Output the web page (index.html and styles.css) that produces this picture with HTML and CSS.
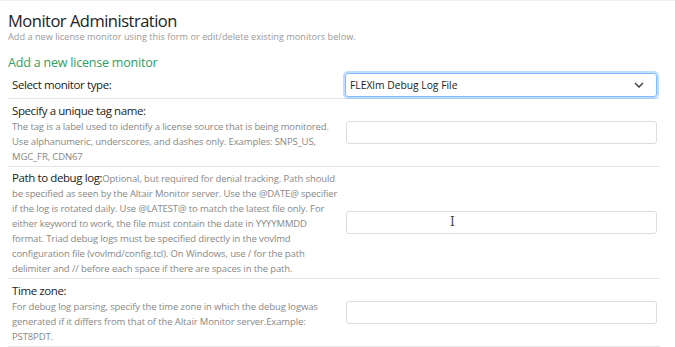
FILE: index.html
```html
<!DOCTYPE html>
<html>
<head>
<meta charset="utf-8">
<link rel="stylesheet" href="styles.css">
</head>
<body>
<div class="page">
  <h1 class="title">Monitor Administration</h1>
  <p class="subtitle">Add a new license monitor using this form or edit/delete existing monitors below.</p>
  <h2 class="section">Add a new license monitor</h2>
  <div class="form">
    <div class="row row-select">
      <div class="label-cell"><span class="label">Select monitor type:</span></div>
      <div class="field-cell">
        <div class="select">
          <span>FLEXlm Debug Log File</span>
          <svg class="chev" width="10" height="6" viewBox="0 0 10 6"><path d="M1 1l4 4 4-4" fill="none" stroke="#333" stroke-width="1.3"/></svg>
        </div>
      </div>
    </div>
    <div class="row">
      <div class="label-cell">
        <div class="label">Specify a unique tag name:</div>
        <div class="desc">The tag is a label used to identify a license source that is being monitored. Use alphanumeric, underscores, and dashes only. Examples: SNPS_US, MGC_FR, CDN67</div>
      </div>
      <div class="field-cell"><div class="input"></div></div>
    </div>
    <div class="row">
      <div class="label-cell">
        <div class="desc"><span class="label">Path to debug log:</span>Optional, but required for denial tracking. Path should be specified as seen by the Altair Monitor server. Use the @DATE@ specifier if the log is rotated daily. Use @LATEST@ to match the latest file only. For either keyword to work, the file must contain the date in YYYYMMDD<br>format. Triad debug logs must be specified directly in the vovlmd configuration file (vovlmd/config.tcl). On Windows, use / for the path delimiter and // before each space if there are spaces in the path.</div>
      </div>
      <div class="field-cell"><div class="input"><span class="cursor">I</span></div></div>
    </div>
    <div class="row">
      <div class="label-cell">
        <div class="label">Time zone:</div>
        <div class="desc">For debug log parsing, specify the time zone in which the debug logwas generated if it differs from that of the Altair Monitor server.Example: PST8PDT.</div>
      </div>
      <div class="field-cell"><div class="input"></div></div>
    </div>
  </div>
</div>
</body>
</html>
```

FILE: styles.css
```css
* { box-sizing: border-box; }
html, body { margin: 0; padding: 0; background: #fff; }
body { font-family: "Open Sans", "Noto Sans", sans-serif; color: #222; }
.page { padding: 9px 15px 0 8px; border-top: 1px solid #f0f0f0; }
.title { font-size: 16.5px; letter-spacing: -0.5px; font-weight: 400; margin: 0; line-height: 21px; color: #222; }
.subtitle { font-size: 9.2px; color: #9a9a9a; margin: 0; line-height: 12px; }
.section { font-size: 12.5px; letter-spacing: -0.2px; font-weight: 400; color: #2f9e68; margin: 11px 0 0; line-height: 17px; }
.form { width: 652px; }
.row { display: grid; grid-template-columns: 337px 1fr; border-bottom: 1px solid #e6e6e6; }
.row-select { padding: 1.5px 0 1.5px; }
.label-cell { padding: 3px 1px 2px 4px; display: flex; flex-direction: column; justify-content: center; }
.row-select .label-cell { padding: 0 0 0 4px; }
.label { font-size: 11.5px; letter-spacing: -0.4px; color: #222; line-height: 17px; }
.desc { font-size: 9.5px; letter-spacing: -0.12px; color: #888; line-height: 15px; }
.desc .label { font-size: 11.5px; line-height: 15px; }
.field-cell { display: flex; align-items: center; }
.select { width: 312px; height: 24px; border: 1px solid #80bdff; border-radius: 3px; box-shadow: 0 0 0 2px rgba(0,123,255,.25); display: flex; align-items: center; justify-content: space-between; padding: 0 12px 0 4px; font-size: 10.3px; color: #222; }
.input { width: 311px; height: 23px; border: 1px solid #ddd; border-radius: 3px; margin-left: 1px; position: relative; }
.cursor { position: absolute; left: 103px; top: 3px; font-family: "DejaVu Serif", serif; font-size: 12px; color: #444; line-height: 14px; }
```
